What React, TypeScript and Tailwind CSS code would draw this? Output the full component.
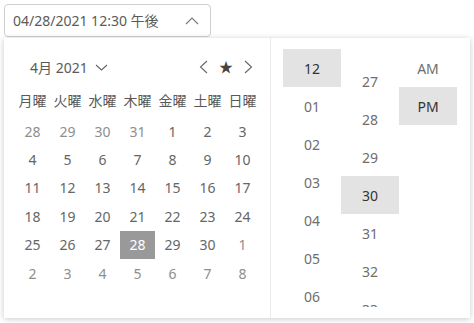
import React from 'react'

const weekdays = ['月曜', '火曜', '水曜', '木曜', '金曜', '土曜', '日曜']

const days = [
  28, 29, 30, 31, 1, 2, 3,
  4, 5, 6, 7, 8, 9, 10,
  11, 12, 13, 14, 15, 16, 17,
  18, 19, 20, 21, 22, 23, 24,
  25, 26, 27, 28, 29, 30, 1,
  2, 3, 4, 5, 6, 7, 8,
]

const hours = ['12', '01', '02', '03', '04', '05', '06']
const minutes = ['27', '28', '29', '30', '31', '32', '33']

const App = () => {
  return (
    <div
      className="w-[474px] h-[323px] bg-white p-[4px] overflow-hidden"
      style={{ fontFamily: '"Noto Sans", "Noto Sans CJK JP", sans-serif' }}
    >
      {/* Input */}
      <div className="w-[207px] h-[33px] border border-[#cfcfcf] rounded-[4px] flex items-center justify-between pl-[8px] pr-[10px]">
        <span className="text-[14px] text-[#5a5a5a] leading-none">04/28/2021 12:30 午後</span>
        <svg width="14" height="8" viewBox="0 0 14 8" className="mr-[1px]">
          <polyline points="1,7 7,1 13,7" fill="none" stroke="#777" strokeWidth="1.1" />
        </svg>
      </div>

      {/* Popup */}
      <div className="mt-[1px] w-[466px] h-[280px] bg-white flex shadow-[0_1px_6px_rgba(0,0,0,0.22)]">
        {/* Calendar */}
        <div className="w-[267px] border-r border-[#eaeaea] pt-[19px] pl-[11px]">
          <div className="h-[20px] flex items-center justify-between pl-[15px] pr-[17px]">
            <div className="flex items-center gap-[7px] text-[14px] text-[#5a5a5a]">
              <span>4月 2021</span>
              <svg width="13" height="7" viewBox="0 0 13 7">
                <polyline points="1,1 6.5,6 12,1" fill="none" stroke="#666" strokeWidth="1.1" />
              </svg>
            </div>
            <div className="flex items-center gap-[11px]">
              <svg width="9" height="14" viewBox="0 0 9 14">
                <polyline points="8,1 1.5,7 8,13" fill="none" stroke="#666" strokeWidth="1.1" />
              </svg>
              <span className="text-[14px] leading-none text-[#444]">★</span>
              <svg width="9" height="14" viewBox="0 0 9 14">
                <polyline points="1,1 7.5,7 1,13" fill="none" stroke="#666" strokeWidth="1.1" />
              </svg>
            </div>
          </div>

          <div className="mt-[8px] grid grid-cols-[repeat(7,35px)] h-[30px] items-center">
            {weekdays.map((w) => (
              <div key={w} className="text-center text-[14px] text-[#5a5a5a]">
                {w}
              </div>
            ))}
          </div>

          <div className="mt-[2px] grid grid-cols-[repeat(7,35px)]">
            {days.map((d, i) => {
              const selected = i === 31
              const other = i < 4 || i > 33
              return (
                <div
                  key={i}
                  className={`h-[28.4px] flex items-center justify-center text-[14px] ${
                    selected ? 'bg-[#999] text-white' : other ? 'text-[#8e8e8e]' : 'text-[#666]'
                  }`}
                >
                  {d}
                </div>
              )
            })}
          </div>
        </div>

        {/* Time */}
        <div className="flex pl-[12px] pt-[11px]">
          <div className="w-[58px] h-[258px] overflow-hidden">
            {hours.map((h) => (
              <div
                key={h}
                className={`h-[38px] flex items-center justify-center text-[14px] ${
                  h === '12' ? 'bg-[#e3e3e3] text-[#333]' : 'text-[#6e6e6e]'
                }`}
              >
                {h}
              </div>
            ))}
          </div>
          <div className="w-[58px] h-[258px] overflow-hidden">
            <div className="mt-[13px]">
              {minutes.map((m) => (
                <div
                  key={m}
                  className={`h-[38px] flex items-center justify-center text-[14px] ${
                    m === '30' ? 'bg-[#e3e3e3] text-[#333]' : 'text-[#6e6e6e]'
                  }`}
                >
                  {m}
                </div>
              ))}
            </div>
          </div>
          <div className="w-[58px]">
            <div className="h-[38px] flex items-center justify-center text-[14px] text-[#6e6e6e]">AM</div>
            <div className="h-[38px] flex items-center justify-center text-[14px] bg-[#e3e3e3] text-[#333]">PM</div>
          </div>
        </div>
      </div>
    </div>
  )
}

export default App
